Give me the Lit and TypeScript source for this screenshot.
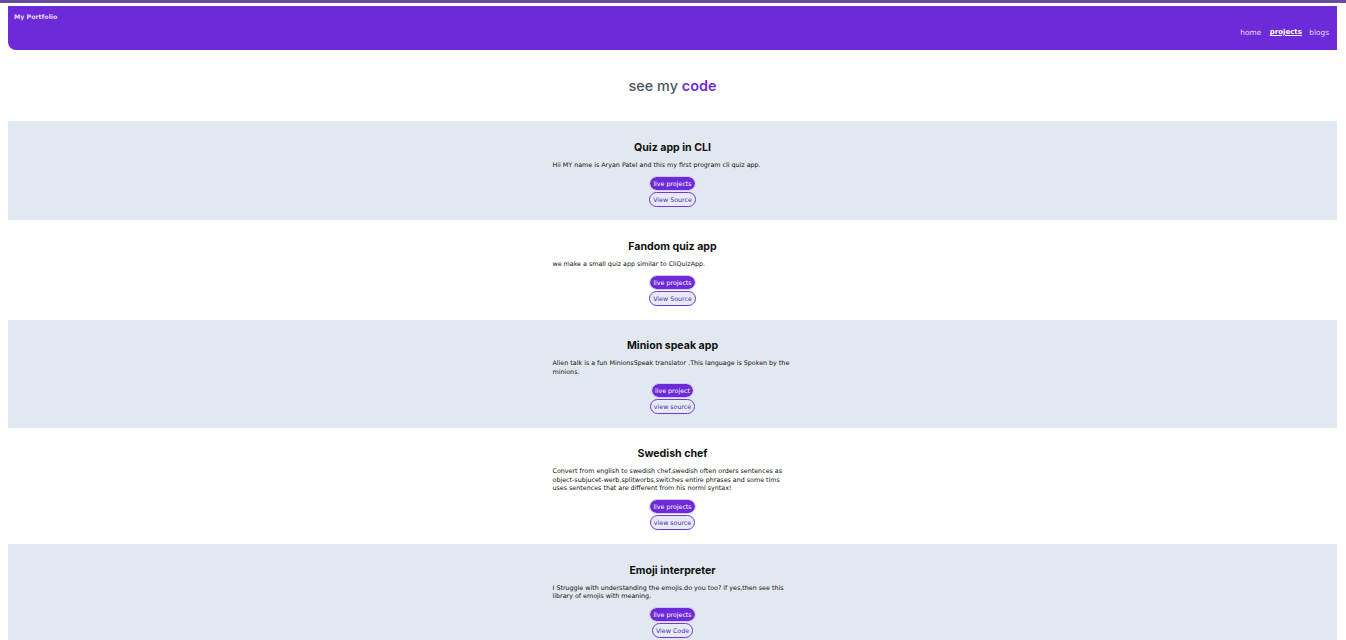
import { LitElement, html, css } from "lit";
import { customElement } from "lit/decorators.js";

const projects = [
  { t: "Quiz app in CLI", d: "Hii MY name is Aryan Patel and this my first program cli quiz app.", a: "live projects", b: "View Source", alt: true },
  { t: "Fandom quiz app", d: "we make a small quiz app similar to CliQuizApp.", a: "live projects", b: "View Source", alt: false },
  { t: "Minion speak app", d: "Alien talk is a fun MinionsSpeak translator .This language is Spoken by the minions.", a: "live project", b: "view source", alt: true },
  { t: "Swedish chef", d: "Convert from english to swedish chef.swedish often orders sentences as object-subjucet-werb,splitworbs,switches entire phrases and some tims uses sentences that are different from his norml syntax!", a: "live projects", b: "view source", alt: false },
  { t: "Emoji interpreter", d: "I Struggle with understanding the emojis.do you too? if yes,then see this library of emojis with meaning.", a: "live projects", b: "View Code", alt: true },
];

@customElement("app-root")
export class AppRoot extends LitElement {
  static styles = css`
    :host {
      display: block;
      height: 640px;
      overflow: hidden;
      background: #fff;
      font-family: "DejaVu Sans", "Noto Sans", sans-serif;
      color: #111;
    }
    .rule {
      height: 3px;
      background: #6a4a9a;
      margin-bottom: 3px;
    }
    .page {
      padding: 0 9px 0 8px;
    }
    nav {
      height: 44px;
      box-sizing: border-box;
      background: #6d2ad8;
      border-radius: 0 0 0 8px;
      color: #e6dcfa;
      padding: 7px 8px 0 6px;
      display: flex;
      flex-direction: column;
    }
    .brand {
      font-size: 6.3px;
      font-weight: 700;
      line-height: 8px;
    }
    ul {
      list-style: none;
      display: flex;
      justify-content: flex-end;
      gap: 8px;
      margin: 7px 0 0;
      padding: 0;
      font-size: 7.4px;
      line-height: 9px;
    }
    li:first-child {
      margin-right: 0.5px;
    }
    .active {
      font-weight: 700;
      font-size: 7px;
      text-decoration: underline;
      color: #fff;
      margin-right: -0.7px;
    }
    h1 {
      margin: 0;
      height: 71px;
      box-sizing: border-box;
      padding-top: 27px;
      text-align: center;
      font-family: Inter, "DejaVu Sans", sans-serif;
      font-size: 14.4px;
      line-height: 17px;
      font-weight: 500;
      color: #4b5563;
    }
    h1 span {
      color: #6d2ad8;
      font-weight: 600;
    }
    .row {
      padding: 19.6px 0 13.85px;
      display: flex;
      justify-content: center;
    }
    .alt {
      background: #e2e8f0;
    }
    .inner {
      width: 240px;
      display: flex;
      flex-direction: column;
      align-items: center;
    }
    h2 {
      margin: 0;
      font-family: Inter, "DejaVu Sans", sans-serif;
      font-size: 10.6px;
      line-height: 13.5px;
      font-weight: 700;
    }
    p {
      align-self: stretch;
      margin: 6.45px 0 6.5px;
      font-size: 6.35px;
      line-height: 8.5px;
    }
    .btn {
      display: block;
      box-sizing: border-box;
      height: 15px;
      line-height: 13px;
      padding: 0 3px;
      font-size: 6.3px;
      border-radius: 8px;
      white-space: nowrap;
    }
    .fill {
      background: #6d2ad8;
      background-clip: padding-box;
      border: 1px solid #d6c8f2;
      color: #fff;
      margin-bottom: 1px;
    }
    .line {
      background: #e6eaf2;
      border: 1px solid #7236dc;
      color: #4f2cb0;
    }
  `;

  render() {
    return html`
      <div class="rule"></div>
      <div class="page">
        <nav>
          <div class="brand">My Portfolio</div>
          <ul>
            <li>home</li>
            <li class="active">projects</li>
            <li>blogs</li>
          </ul>
        </nav>
        <h1>see my <span>code</span></h1>
        ${projects.map(
          (p) => html`
            <section class="row ${p.alt ? "alt" : ""}">
              <div class="inner">
                <h2>${p.t}</h2>
                <p>${p.d}</p>
                <a class="btn fill">${p.a}</a>
                <a class="btn line">${p.b}</a>
              </div>
            </section>
          `
        )}
      </div>
    `;
  }
}
